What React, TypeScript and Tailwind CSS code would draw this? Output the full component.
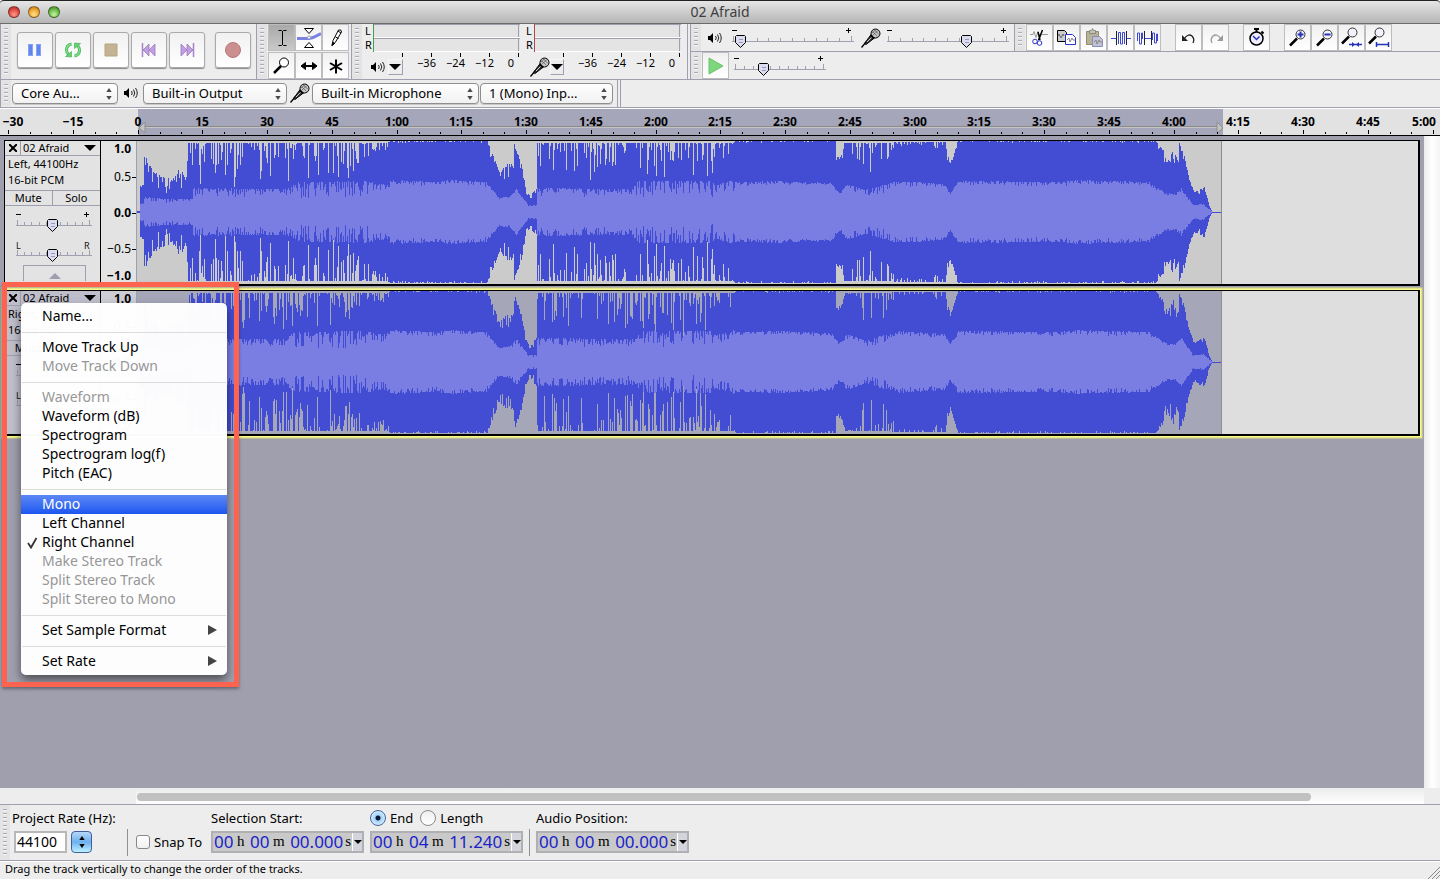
import { useMemo, useState } from 'react';
import type { ReactNode } from 'react';
import clsx from 'clsx';

const PX_PER_15S = 64.75;
const RULER_ZERO = 138;
const CLIP_WIDTH = 1084;
const MID = 71;

type Point = [x: number, low: number, high: number, dips: number];

// x, quiet limit, loud limit, share of quiet columns
const peaks: Point[] = [
  [0, 1, 1, 0],
  [3, 1, 1, 0],
  [3, 22, 28, 0.7],
  [7, 24, 28, 0.7],
  [7, 36, 58, 0.9],
  [12, 30, 48, 1],
  [20, 20, 38, 1],
  [28, 16, 34, 1],
  [40, 18, 42, 1],
  [50, 20, 38, 1],
  [50, 26, 69, 0.7],
  [56, 26, 69, 0.7],
  [56, 20, 69, 0.52],
  [130, 26, 69, 0.52],
  [200, 24, 69, 0.6],
  [226, 40, 69, 0.6],
  [232, 54, 69, 0.6],
  [250, 58, 69, 0.6],
  [253, 69, 71, 0.6],
  [350, 69, 71, 0.6],
  [353, 54, 64, 0.8],
  [362, 26, 40, 0.8],
  [370, 34, 48, 0.9],
  [376, 34, 48, 0.9],
  [377, 58, 68, 0.8],
  [384, 38, 48, 0.8],
  [389, 16, 22, 0.8],
  [393, 12, 16, 0.8],
  [400, 12, 26, 0.8],
  [400, 32, 69, 0.5],
  [505, 28, 69, 0.52],
  [570, 20, 69, 0.55],
  [578, 44, 69, 0.6],
  [596, 50, 69, 0.6],
  [598, 69, 71, 0.5],
  [698, 69, 71, 0.5],
  [699, 50, 54, 0.8],
  [705, 52, 58, 0.8],
  [707, 60, 69, 0.6],
  [727, 32, 69, 0.55],
  [750, 42, 69, 0.55],
  [758, 64, 70, 0.5],
  [795, 68, 70, 0.5],
  [800, 58, 70, 0.5],
  [808, 62, 70, 0.5],
  [810, 44, 56, 0.8],
  [815, 46, 52, 0.8],
  [820, 66, 70, 0.5],
  [821, 69, 71, 0.5],
  [1018, 69, 71, 0.5],
  [1026, 50, 62, 0.8],
  [1030, 38, 50, 0.8],
  [1036, 44, 62, 0.8],
  [1041, 40, 50, 0.8],
  [1042, 60, 69, 0.5],
  [1047, 46, 56, 0.8],
  [1052, 26, 32, 0.8],
  [1057, 16, 20, 0.8],
  [1067, 18, 25, 0.8],
  [1072, 4, 6, 0.5],
  [1075, 0.5, 0.5, 0],
  [1084, 0.5, 0.5, 0],
];

const rms: Point[] = [
  [0, 0, 0, 0],
  [3, 0, 0, 0],
  [3, 7, 8, 0.5],
  [7, 8, 10, 0.5],
  [7, 11, 15, 0.8],
  [30, 8, 13, 0.8],
  [56, 8, 13, 0.8],
  [56, 15, 24, 0.9],
  [150, 15, 23, 0.9],
  [155, 13, 30, 0.9],
  [226, 12, 31, 0.9],
  [246, 20, 28, 0.9],
  [256, 27, 32, 0.9],
  [300, 25, 30, 0.9],
  [312, 28, 32, 0.9],
  [349, 25, 30, 0.9],
  [362, 11, 14, 0.8],
  [373, 13, 16, 0.8],
  [379, 19, 23, 0.8],
  [391, 5, 7, 0.8],
  [400, 5, 7, 0.8],
  [400, 15, 24, 0.9],
  [495, 14, 23, 0.9],
  [500, 12, 31, 0.9],
  [575, 12, 31, 0.9],
  [578, 18, 27, 0.9],
  [596, 20, 32, 0.9],
  [598, 26, 30, 0.9],
  [640, 27, 31, 0.9],
  [694, 25, 29, 0.9],
  [702, 16, 19, 0.8],
  [710, 22, 28, 0.9],
  [727, 13, 22, 0.9],
  [750, 18, 28, 0.9],
  [760, 26, 31, 0.9],
  [807, 23, 28, 0.9],
  [813, 17, 19, 0.8],
  [821, 26, 31, 0.9],
  [920, 25, 30, 0.9],
  [940, 27, 32, 0.9],
  [1012, 25, 30, 0.9],
  [1028, 17, 19, 0.8],
  [1038, 15, 18, 0.8],
  [1044, 19, 24, 0.8],
  [1056, 6, 7, 0.8],
  [1066, 6, 8, 0.8],
  [1075, 0, 0, 0],
  [1084, 0, 0, 0],
];

function makeRandom(seed: number) {
  let s = seed;
  return () => {
    s = (s * 1664525 + 1013904223) % 4294967296;
    return s / 4294967296;
  };
}

function sample(points: Point[], x: number) {
  let i = 0;
  while (i < points.length - 2 && points[i + 1][0] <= x) i++;
  const a = points[i];
  const b = points[i + 1];
  const t = (x - a[0]) / (b[0] - a[0]);
  return { low: a[1] + (b[1] - a[1]) * t, high: a[2] + (b[2] - a[2]) * t, dips: a[3] };
}

function columnPath(points: Point[], seed: number) {
  const random = makeRandom(seed);
  let d = '';
  for (let x = 0; x < CLIP_WIDTH; x++) {
    const { low, high, dips } = sample(points, x);
    const depth = random() < dips ? random() ** 2 : 0;
    const skew = 0.7 + random() * 0.3;
    const up = high - (high - low) * depth * skew;
    const down = high - (high - low) * depth;
    const top = Math.round(MID - up);
    const bottom = Math.max(top, Math.round(MID + down));
    if (high > 0) d += `M${x} ${top}h1V${bottom === top ? top + 1 : bottom}h-1z`;
  }
  return d;
}

function Waveform({ seed }: { seed: number }) {
  const outer = useMemo(() => columnPath(peaks, seed), [seed]);
  const inner = useMemo(() => columnPath(rms, seed + 7), [seed]);
  return (
    <svg width={CLIP_WIDTH} height="143" shapeRendering="crispEdges" className="block shrink-0">
      <path d={outer} fill="#434dd3" />
      <path d={inner} fill="#7a7ee3" />
    </svg>
  );
}

function Grip() {
  return (
    <div className="flex w-[10px] shrink-0 flex-col items-center self-stretch bg-[#e3e3e3] py-1">
      <div className="w-1 flex-1 bg-[repeating-linear-gradient(to_bottom,#a9a9ba_0_1px,#f6f6f6_1px_2px,transparent_2px_4px)]" />
    </div>
  );
}

function SpeakerIcon() {
  return (
    <svg width="14" height="14" viewBox="0 0 14 14" className="shrink-0">
      <path d="M0 5h2l3-3v10L2 9H0z" fill="#000" />
      <path d="M7.500 5q1.500 2 0 4M9.500 3.500q2.500 3.500 0 7M11.500 2q3.500 5 0 10" fill="none" stroke="#222" strokeWidth="1" />
    </svg>
  );
}

function MicIcon() {
  return (
    <svg width="20" height="20" viewBox="0 0 20 20" className="shrink-0">
      <path d="M0.500 19.500l5-6" stroke="#000" strokeWidth="1.300" />
      <path d="M3.500 15.500L10.500 6l3.500 3.500L5 16.500z" fill="#333" stroke="#000" />
      <path d="M6 14l5.500-5.500" stroke="#ccc" strokeWidth="1" />
      <circle cx="14.500" cy="5.500" r="4.500" fill="#c8c8c8" stroke="#000" />
      <path d="M11.500 3.500l5 5M13.500 2l4.500 4.500M11.500 7.500l5.500-5M11 5l4-3.500" stroke="#555" strokeWidth=".7" />
      <path d="M10 7.500l3 3" stroke="#000" strokeWidth="1.800" />
    </svg>
  );
}

function Updown() {
  return (
    <svg width="6" height="12" viewBox="0 0 6 12" className="pointer-events-none absolute right-[6px] top-[5px]">
      <path d="M3 0l2.700 4H.3zM3 12l2.700-4H.3z" fill="#4b4b4b" />
    </svg>
  );
}

interface SliderProps {
  label: string;
  value: number;
  width: number;
  ticks: number;
  minus?: string;
  plus?: string;
}

function Slider({ label, value, width, ticks, minus = '−', plus = '+' }: SliderProps) {
  const [current, setCurrent] = useState(value);
  const x = Math.round(5 + ((width - 11) * current) / 100) + 0.5;
  const letters = minus === 'L';
  return (
    <div className="relative h-[23px] shrink-0">
      <svg width={width} height="23" shapeRendering="crispEdges" className="block">
        <path d={`M0 15.500H${width}`} stroke="#a0a0b0" />
        {Array.from({ length: ticks }, (_, i) => {
          const tx = Math.round(1 + (i * (width - 4)) / (ticks - 1));
          const end = i === 0 || i === ticks - 1;
          return <path key={i} d={`M${tx + 0.5} ${end ? 10 : 12}V15`} stroke="#a0a0b0" />;
        })}
        {letters ? (
          <g fontSize="9" fill="#111">
            <text x="0" y="9">{minus}</text>
            <text x={width - 8} y="9">{plus}</text>
          </g>
        ) : (
          <path d={`M0 4.500h5M${width - 8} 4.500h5M${width - 5.5} 2v5`} stroke="#000" />
        )}
        <path d={`M${x - 4} 9.500h8l1 1v6l-5 5l-5-5v-6z`} fill="#dcdcf0" stroke="#000" shapeRendering="auto" />
        <path d={`M${x - 2} 13.500h4M${x - 2} 16.500h4`} stroke="#9a9ab8" />
      </svg>
      <input
        type="range"
        aria-label={label}
        value={current}
        onChange={(e) => setCurrent(Number(e.target.value))}
        className="absolute inset-0 h-full w-full cursor-pointer opacity-0"
      />
    </div>
  );
}

function TransportButton({ label, children }: { label: string; children: ReactNode }) {
  return (
    <button
      aria-label={label}
      className="flex size-9 items-center justify-center rounded-[3px] border border-[#aaa] bg-linear-to-b from-[#f1f1f1] to-white shadow-[0_1px_1px_#888]"
    >
      <svg width="18" height="18" viewBox="0 0 18 18">{children}</svg>
    </button>
  );
}

function ToolButton({ label, pressed, children }: { label: string; pressed?: boolean; children: ReactNode }) {
  return (
    <button
      aria-label={label}
      className={clsx(
        'flex size-[27px] shrink-0 items-center justify-center border border-[#bdbdbd]',
        pressed ? 'bg-linear-to-b from-[#a9a9a9] to-[#c9c9c9]' : 'bg-linear-to-b from-[#f0f0f0] to-white',
      )}
    >
      <svg width="24" height="24" viewBox="0 0 24 24" fill="none" stroke="#000">{children}</svg>
    </button>
  );
}

function TransportBar() {
  return (
    <div className="flex w-[256px] shrink-0 items-center border-r border-[#9f9fb0]">
      <Grip />
      <div className="flex gap-[2px] pb-[3px] pl-[6px]">
        <TransportButton label="Pause">
          <path d="M2 3h5v12H2zM10 3h5v12h-5z" fill="#5e86ee" />
          <path d="M2.500 3.500h4v11h-4zM10.500 3.500h4v11h-4z" fill="none" stroke="#86a6f4" />
        </TransportButton>
        <TransportButton label="Loop">
          <path d="M7.500 3Q2.500 4 2.500 9q0 2.500 2 4.500M10.500 15Q15.500 14 15.500 9q0-2.500-2-4.500" fill="none" stroke="#45b358" strokeWidth="3" />
          <path d="M7.500 3Q2.500 4 2.500 9q0 2.500 2 4.500M10.500 15Q15.500 14 15.500 9q0-2.500-2-4.500" fill="none" stroke="#7be087" strokeWidth="1.500" />
          <path d="M1.500 15.500l6 .5V10.500zM16.500 2.500l-6-.5V7.500z" fill="#66d275" stroke="#3da64e" strokeWidth=".6" />
        </TransportButton>
        <TransportButton label="Stop">
          <path d="M3 3h12v12H3z" fill="#c4b494" stroke="#b5a582" />
        </TransportButton>
        <TransportButton label="Skip to Start">
          <path d="M2.500 2v14" stroke="#a583c8" strokeWidth="1.500" />
          <path d="M9 3v12L3 9zM15 3v12L9 9z" fill="#c09fe0" stroke="#9c76c2" strokeWidth=".8" />
        </TransportButton>
        <TransportButton label="Skip to End">
          <path d="M15.500 2v14" stroke="#a583c8" strokeWidth="1.500" />
          <path d="M3 3v12l6-6zM9 3v12l6-6z" fill="#c09fe0" stroke="#9c76c2" strokeWidth=".8" />
        </TransportButton>
        <div className="w-[6px]" />
        <TransportButton label="Record">
          <circle cx="9" cy="9" r="7.500" fill="#cb8f8f" stroke="#b87878" />
        </TransportButton>
      </div>
    </div>
  );
}

function ToolsBar() {
  return (
    <div className="flex w-[95px] shrink-0 border-r border-[#9f9fb0]">
      <Grip />
      <div className="grid grid-cols-3 gap-y-px pl-px">
        <ToolButton label="Selection Tool" pressed>
          <path d="M8.500 4.500h3l1 1 1-1h3M12.500 5v14M8.500 19.500h3l1-1 1 1h3" />
        </ToolButton>
        <ToolButton label="Envelope Tool">
          <path d="M0 12.500h12l4-1 8-4" stroke="#7a82e4" strokeWidth="3" />
          <path d="M7.500 2.500h9L12 7.500zM7.500 21.500h9L12 16.500z" fill="#fff" />
          <circle cx="12" cy="11.500" r="1.500" fill="#fff" stroke="#99a" />
        </ToolButton>
        <ToolButton label="Draw Tool">
          <path d="M8 19.500l1-5L14.500 4q3-1 3 2L11.500 16z" fill="#fff" />
          <path d="M14 5l3 2M8 19.500l1-3 1.500 1zM11.500 11l3 1.500" fill="#000" />
        </ToolButton>
        <ToolButton label="Zoom Tool">
          <circle cx="14" cy="8.500" r="4.500" fill="#fff" />
          <path d="M11 12l-7 7" strokeWidth="2.500" />
        </ToolButton>
        <ToolButton label="Time Shift Tool">
          <path d="M5 12h14" strokeWidth="2" />
          <path d="M4 12l4.500-3.500v7zM20 12l-4.500-3.500v7z" fill="#000" />
        </ToolButton>
        <ToolButton label="Multi Tool">
          <path d="M12 5.500v14M6 9l12 7M18 9L6 16" strokeWidth="2" />
        </ToolButton>
      </div>
    </div>
  );
}

function Meter({ label, color, icon }: { label: string; color: string; icon: ReactNode }) {
  return (
    <div className="w-[158px] shrink-0">
      {['L', 'R'].map((ch) => (
        <div key={ch} className="flex h-[14px] items-stretch text-[11px] leading-[14px]">
          <span className="w-2">{ch}</span>
          <span className={clsx('w-px', color)} />
          <span className="w-[146px] border-y border-t-[#9f9fb0] border-b-white bg-[#e4e4e4]">
            <span className="block h-full w-[145px] border-r border-[#9f9fb0]" />
          </span>
        </div>
      ))}
      <svg width="158" height="5" shapeRendering="crispEdges" className="block">
        <path d="M37.500 1v4M66.500 1v4M95.500 1v4M124.500 1v4M153.500 1v4" stroke="#000" />
      </svg>
      <div className="flex items-start">
        <span className="flex h-5 w-[27px] items-center justify-center pl-1">{icon}</span>
        <button aria-label={label} className="mt-[2px] flex h-4 w-[18px] items-center justify-center border border-[#f8f8f8] border-r-[#9f9fb0] border-b-[#9f9fb0]">
          <svg width="12" height="6"><path d="M0 0h12L6 6z" /></svg>
        </button>
        <span className="flex pl-[9px] text-center text-[11px] leading-[12px]">
          <span className="w-[29px]">−36</span>
          <span className="w-[29px]">−24</span>
          <span className="w-[29px]">−12</span>
          <span className="w-6">0</span>
        </span>
      </div>
    </div>
  );
}

function ZoomLens({ children }: { children?: ReactNode }) {
  return (
    <>
      <path d="M11 12.500l-7 7" strokeWidth="2.500" />
      <circle cx="14.500" cy="8.500" r="4.500" fill="#f2f2fa" stroke="#333" />
      {children}
    </>
  );
}

function EditBar() {
  return (
    <div className="flex flex-1 items-center">
      <Grip />
      <div className="flex pl-px">
        <ToolButton label="Cut">
          <path d="M2 8.500h3l1-3 2 6 2-6 2 6 1-3h7" stroke="#999" />
          <path d="M14.500 4l-4 10M10 6l2 8" strokeWidth="1.500" />
          <circle cx="7" cy="15.500" r="2.300" stroke="#2a35c8" />
          <circle cx="11.500" cy="17" r="2.300" stroke="#2a35c8" />
        </ToolButton>
        <ToolButton label="Copy">
          <path d="M2.500 4.500h7l2 2v9h-9z" fill="#ccc" />
          <path d="M3 10l1-2 2 4 2-4 1 2" stroke="#666" />
          <path d="M10.500 8.500h7l3 3v7h-10z" fill="#fff" stroke="#2a35c8" />
          <path d="M12 14l2-2 1 4 2-4 1 2h2" stroke="#888" />
        </ToolButton>
        <ToolButton label="Paste">
          <path d="M4.500 5.500h12v13h-12z" fill="#b5b297" stroke="#8f8d78" />
          <path d="M7.500 4.500h2l1-2 1 2h2v3h-6z" fill="#c5c3aa" stroke="#888" />
          <path d="M10.500 10.500h7l3 3v7h-10z" fill="#c0c2d4" stroke="#8c8fb4" />
          <path d="M12 16l2-2 1 4 2-4 1 2h2" stroke="#888" />
        </ToolButton>
        <ToolButton label="Trim">
          <path d="M2 12.500h5M17 12.500h5M9.500 18V6.500h2V18h2V6.500h2V18" stroke="#3c49d0" />
          <path d="M7.500 5v14M17.500 5v14" stroke="#223" />
        </ToolButton>
        <ToolButton label="Silence">
          <path d="M1.500 15V7h2v11h2V7h1v6M8 12.500h7M16.500 14V7h2v10h2V8h1v7" stroke="#3c49d0" />
          <path d="M8.500 5v14M15.500 5v14" stroke="#223" />
        </ToolButton>
      </div>
      <div className="flex pl-[14px]">
        <ToolButton label="Undo">
          <path d="M5 9v6h6z" fill="#222" stroke="none" />
          <path d="M7 13q4-6 8-3 3 3 1 7" stroke="#222" strokeWidth="1.300" />
        </ToolButton>
        <ToolButton label="Redo">
          <path d="M19 9v6h-6z" fill="#999" stroke="none" />
          <path d="M17 13q-4-6-8-3-3 3-1 7" stroke="#999" strokeWidth="1.300" />
        </ToolButton>
      </div>
      <div className="pl-[14px]">
        <ToolButton label="Timer Record">
          <circle cx="11.500" cy="12.500" r="6.500" fill="#eef" strokeWidth="1.500" />
          <path d="M11.500 3v3M9 3h5M16.500 5.500l2 2" strokeWidth="2" />
          <path d="M8 10l3.500 3.500 3-3" stroke="#2a35c8" strokeWidth="1.500" />
        </ToolButton>
      </div>
      <div className="flex pl-[14px]">
        <ToolButton label="Zoom In">
          <ZoomLens><path d="M11.500 8.500h6M14.500 5.500v6" stroke="#2633b8" strokeWidth="2" /></ZoomLens>
        </ToolButton>
        <ToolButton label="Zoom Out">
          <ZoomLens><path d="M11.500 8.500h6" stroke="#2633b8" strokeWidth="2" /></ZoomLens>
        </ToolButton>
        <ToolButton label="Fit Selection">
          <g transform="translate(-2 -2)"><ZoomLens /></g>
          <path d="M9 18.500h13" stroke="#2633b8" strokeWidth="1.500" />
          <path d="M12 16l3 2.500-3 2.500zM19 16l-3 2.500 3 2.500z" fill="#2633b8" stroke="none" />
        </ToolButton>
        <ToolButton label="Fit Project">
          <g transform="translate(-2 -2)"><ZoomLens /></g>
          <path d="M9 18.500h13M9.500 16v5M21.500 16v5" stroke="#2633b8" strokeWidth="1.500" />
        </ToolButton>
      </div>
    </div>
  );
}

function DeviceSelect({ label, value, className }: { label: string; value: string; className: string }) {
  return (
    <div className={clsx('relative shrink-0', className)}>
      <select
        aria-label={label}
        className="block h-[21px] w-full appearance-none rounded-[4px] border border-[#8e8e8e] bg-linear-to-b from-white to-[#f1f1f1] pb-px pl-2 text-[13px] leading-[18px] shadow-[0_1px_0_#c8c8c8]"
      >
        <option>{value}</option>
      </select>
      <Updown />
    </div>
  );
}

function formatTime(seconds: number) {
  if (Math.abs(seconds) < 60) return String(seconds).replace('-', '−');
  return `${Math.floor(seconds / 60)}:${String(seconds % 60).padStart(2, '0')}`;
}

function Timeline() {
  const marks = Array.from({ length: 23 }, (_, i) => i - 2);
  return (
    <div className="overflow-hidden border-t border-b border-t-white border-b-black bg-[#e2e2e2]">
      <svg width="1440" height="26" className="block" shapeRendering="crispEdges">
        <path d="M138 0h1085v26H138z" fill="#a5a6b9" />
        <path d="M138 17.500h1084" stroke="#8b8b8b" />
        <path d="M138 18.500h1084" stroke="#c4c4c4" />
        <path d="M145 13v11l-6-5zM1217 13v11l6-5z" fill="#c2c2c2" stroke="#8e8e8e" shapeRendering="auto" />
        {marks.map((n) => {
          const x = Math.floor(RULER_ZERO + n * PX_PER_15S);
          const edge = n === -2 ? 13 : n === 20 ? 1424 : x;
          return (
            <g key={n}>
              <path d={`M${x + 0.5} 21v4M${x + 22.5} 23v2M${x + 43.5} 23v2`} stroke="#000" />
              {n <= 20 && (
                <text x={edge} y="17" textAnchor="middle" fontSize="12" fontWeight="700">
                  {formatTime(n * 15)}
                </text>
              )}
            </g>
          );
        })}
      </svg>
    </div>
  );
}

function Track({ channel, seed, selected, children }: { channel: string; seed: number; selected?: boolean; children?: ReactNode }) {
  return (
    <section
      className={clsx(
        'relative flex h-[146px] border border-r-2 border-b-2 border-black',
        selected && 'shadow-[0_0_0_1px_#fbfb8a,0_0_0_2px_#e4e48c,0_0_0_3px_#bcbc94]',
      )}
    >
      <div className={clsx('flex w-24 shrink-0 flex-col overflow-hidden border-r border-black', selected ? 'bg-[#bfbfcb]' : 'bg-[#e3e3e3]')}>
        <div className="flex h-[15px] shrink-0 border-b border-[#9f9fb0]">
          <button aria-label="Close track" className="flex w-4 items-center justify-center border-r border-[#9f9fb0]">
            <svg width="8" height="8"><path d="M0 0l8 8M8 0L0 8" stroke="#000" strokeWidth="2" /></svg>
          </button>
          <button className="flex flex-1 items-center justify-between pl-[2px] pr-1 text-[11px] leading-[14px]">
            <span>02 Afraid</span>
            <svg width="12" height="6"><path d="M0 0h12L6 6z" /></svg>
          </button>
        </div>
        <div className="shrink-0 pl-[3px] text-[11px] leading-4">
          <p>{channel}, 44100Hz</p>
          <p>16-bit PCM</p>
        </div>
        <div className="mt-[2px] grid h-4 shrink-0 grid-cols-2 border-y border-[#9f9fb0] text-[11px] leading-[14px]">
          <button className="border-r border-[#9f9fb0]">Mute</button>
          <button>Solo</button>
        </div>
        <div className="flex flex-col gap-[7px] pl-[11px] pt-[4px]">
          <Slider label="Gain" value={48} width={76} ticks={11} />
          <Slider label="Pan" value={48} width={76} ticks={11} minus="L" plus="R" />
        </div>
        <button aria-label="Collapse" className="mx-[18px] mr-[14px] mt-[2px] flex h-4 shrink-0 items-center justify-center border border-b-0 border-[#9f9fb0] pt-1">
          <svg width="12" height="6"><path d="M0 6h12L6 0z" fill="#9f9fb0" /></svg>
        </button>
      </div>
      <div
        className={clsx(
          'grid w-9 shrink-0 grid-rows-[16px_40px_32px_40px_14px] items-center border-r border-[#9f9fb0] pl-px text-[12px] leading-4',
          selected ? 'bg-[#cdcdd6]' : 'bg-[#e3e3e3]',
        )}
      >
        {['1.0', '0.5', '0.0', '−0.5', '−1.0'].map((v) => (
          <span key={v} className={clsx('flex items-center justify-end gap-px', !v.endsWith('5') && 'font-bold')}>
            {v}
            <span className={clsx('h-px w-1', v.endsWith('1.0') ? 'bg-transparent' : 'bg-black')} />
          </span>
        ))}
      </div>
      <div className="flex min-w-0 flex-1 overflow-hidden bg-[#dedede]">
        <div className={clsx('shrink-0 border-r border-[#8e8e90]', selected ? 'bg-[#a5a6b8]' : 'bg-[#cbcbcb]')}>
          <Waveform seed={seed} />
        </div>
      </div>
      {children}
    </section>
  );
}

interface MenuEntry {
  text: string;
  state?: 'disabled' | 'active' | 'checked' | 'submenu';
}

const menuGroups: MenuEntry[][] = [
  [{ text: 'Name...' }],
  [{ text: 'Move Track Up' }, { text: 'Move Track Down', state: 'disabled' }],
  [
    { text: 'Waveform', state: 'disabled' },
    { text: 'Waveform (dB)' },
    { text: 'Spectrogram' },
    { text: 'Spectrogram log(f)' },
    { text: 'Pitch (EAC)' },
  ],
  [
    { text: 'Mono', state: 'active' },
    { text: 'Left Channel' },
    { text: 'Right Channel', state: 'checked' },
    { text: 'Make Stereo Track', state: 'disabled' },
    { text: 'Split Stereo Track', state: 'disabled' },
    { text: 'Split Stereo to Mono', state: 'disabled' },
  ],
  [{ text: 'Set Sample Format', state: 'submenu' }],
  [{ text: 'Set Rate', state: 'submenu' }],
];

function TrackMenu() {
  return (
    <div role="menu" className="absolute left-4 top-3 z-10 w-[206px] rounded-[5px] bg-white/98 py-1 shadow-[0_5px_10px_rgba(0,0,0,0.5)]">
      {menuGroups.map((group, i) => (
        <div key={i}>
          {i > 0 && <div className="mx-px my-[5px] h-[2px] border-b border-[#dcdcdc]" />}
          {group.map((item) => (
            <button
              key={item.text}
              role="menuitem"
              disabled={item.state === 'disabled'}
              className={clsx(
                'relative flex h-[19px] w-full items-center pb-[2px] pl-[21px] pr-[10px] text-left text-[14px] leading-[17px]',
                item.state === 'disabled' && 'text-[#979797]',
                item.state === 'active' && 'bg-linear-to-b from-[#5d87f5] to-[#1b55f0] text-white',
              )}
            >
              {item.state === 'checked' && (
                <svg width="12" height="12" className="absolute left-[6px] top-1">
                  <path d="M1 6l3 4.500 5.500-9.500" fill="none" stroke="#333" strokeWidth="1.800" />
                </svg>
              )}
              <span className="flex-1">{item.text}</span>
              {item.state === 'submenu' && <svg width="9" height="10"><path d="M0 0l9 5-9 5z" fill="#444" /></svg>}
            </button>
          ))}
        </div>
      ))}
    </div>
  );
}

function TimeField({ label, parts }: { label: string; parts: [string, string, string] }) {
  const units = ['h', 'm', 's'];
  return (
    <div role="group" aria-label={label} className="flex h-[22px] w-[153px] border-2 border-[#b0b0b4] bg-[#c9c9c9] pl-px">
      <div className="flex flex-1 items-center justify-between pb-[2px] pr-px">
        {parts.map((part, i) => (
          <label key={units[i]} className="flex items-center gap-[2px]">
            <input
              defaultValue={part}
              className={clsx('h-4 bg-transparent p-0 text-[17px] leading-4 text-[#1a24c8]', part.length > 2 ? 'w-[53px]' : 'w-[21px]')}
            />
            <span className="font-['Liberation_Serif',serif] text-[15px] leading-4">{units[i]}</span>
          </label>
        ))}
      </div>
      <button aria-label={`${label} format`} className="flex w-[10px] shrink-0 items-center justify-center border-l border-white bg-[#d4d4dc]">
        <svg width="8" height="4"><path d="M0 0h8L4 4z" /></svg>
      </button>
    </div>
  );
}

function Radio({ label, checked }: { label: string; checked?: boolean }) {
  return (
    <label className="flex items-center gap-1">
      <input
        type="radio"
        name="range-mode"
        defaultChecked={checked}
        className="size-4 appearance-none rounded-full border border-[#8a8a8a] bg-linear-to-b from-[#eee] to-white checked:border-[#47649c] checked:bg-[radial-gradient(circle,#0b1a38_0_2px,#a5d2f8_3px,#cfeaff_7px)]"
      />
      {label}
    </label>
  );
}

function SelectionBar() {
  return (
    <div className="flex h-[57px] border-y border-[#9f9fb0] text-[13px] leading-[18px]">
      <Grip />
      <div className="flex w-[117px] flex-col gap-1 pl-[2px] pt-1">
        <label htmlFor="rate" className="whitespace-nowrap">Project Rate (Hz):</label>
        <div className="flex gap-1 pl-[2px]">
          <input id="rate" defaultValue="44100" className="h-[22px] w-[53px] border-2 border-[#b8b8b8] bg-white pb-[2px] pl-px text-[14px] leading-4" />
          <button aria-label="Rates" className="flex h-[22px] w-[21px] items-center justify-center rounded-[4px] border border-[#3f5f9c] bg-linear-to-b from-[#b5d7f8] via-[#6db0ee] to-[#bdf0ff]">
            <svg width="6" height="12"><path d="M3 0l2.700 4H.3zM3 12l2.700-4H.3z" /></svg>
          </button>
        </div>
      </div>
      <div className="mt-6 h-[27px] w-px bg-[#909090]" />
      <label className="flex w-[83px] items-center gap-1 self-end pb-[9px] pl-2">
        <input type="checkbox" className="size-[14px] appearance-none rounded-[3px] border border-[#888] bg-linear-to-b from-white to-[#f0f0f0]" />
        Snap To
      </label>
      <div className="flex w-[159px] flex-col gap-1 pt-1">
        <span>Selection Start:</span>
        <TimeField label="Selection Start" parts={['00', '00', '00.000']} />
      </div>
      <div className="flex flex-col gap-1 pt-1">
        <div className="flex gap-[7px]">
          <Radio label="End" checked />
          <Radio label="Length" />
        </div>
        <TimeField label="Selection End" parts={['00', '04', '11.240']} />
      </div>
      <div className="mx-[6px] mt-6 h-[27px] w-px bg-[#909090]" />
      <div className="flex flex-col gap-1 pt-1">
        <span>Audio Position:</span>
        <TimeField label="Audio Position" parts={['00', '00', '00.000']} />
      </div>
    </div>
  );
}

const lights = [
  { name: 'Close', color: 'bg-[radial-gradient(circle_at_50%_75%,#ff9a8c,#e0443e_60%,#a02a26)]' },
  { name: 'Minimize', color: 'bg-[radial-gradient(circle_at_50%_75%,#ffe28a,#eda12f_60%,#a86a18)]' },
  { name: 'Zoom', color: 'bg-[radial-gradient(circle_at_50%_75%,#c6f5a0,#66b544_60%,#3c7a26)]' },
];

export default function App() {
  return (
    <div className="flex h-screen flex-col overflow-hidden bg-[#ededed] font-['Noto_Sans',sans-serif] text-black">
      <header className="relative flex h-6 shrink-0 items-center justify-center rounded-t-[4px] border-t border-b border-t-[#222] border-b-[#6b6b6b] bg-linear-to-b from-[#e6e6e6] to-[#b5b5b5]">
        <div className="absolute left-2 flex gap-2">
          {lights.map((l) => (
            <button key={l.name} aria-label={l.name} className={clsx('size-3 rounded-full border border-black/40', l.color)} />
          ))}
        </div>
        <h1 className="text-[14px] leading-5 text-[#404040]">02 Afraid</h1>
      </header>

      <div className="flex h-14 shrink-0 border-b border-l border-[#9f9fb0]">
        <TransportBar />
        <ToolsBar />
        <div className="flex w-[336px] shrink-0 gap-[3px] border-r border-[#9f9fb0]">
          <Grip />
          <Meter label="Output meter options" color="bg-[#3fa050]" icon={<SpeakerIcon />} />
          <Meter label="Input meter options" color="bg-[#b04848]" icon={<MicIcon />} />
        </div>
        <div className="ml-[2px] flex min-w-0 flex-1 flex-col border-l border-[#9f9fb0]">
          <div className="flex h-7 border-b border-[#9f9fb0]">
            <div className="flex w-[324px] shrink-0 items-center border-r border-[#9f9fb0]">
              <Grip />
              <div className="flex items-center pl-[7px]">
                <SpeakerIcon />
                <div className="w-[10px]" />
                <Slider label="Output volume" value={3} width={122} ticks={11} />
                <div className="flex w-[33px] justify-center"><MicIcon /></div>
                <Slider label="Input volume" value={67} width={122} ticks={11} />
              </div>
            </div>
            <EditBar />
          </div>
          <div className="flex flex-1 items-center">
            <Grip />
            <div className="flex items-center gap-[5px] pl-px">
              <ToolButton label="Play at speed">
                <path d="M5 4v16l14-8z" fill="#7cd67c" stroke="#6bc26b" />
              </ToolButton>
              <Slider label="Playback speed" value={30} width={92} ticks={11} />
            </div>
          </div>
        </div>
      </div>

      <div className="flex h-7 shrink-0 border-b border-l border-[#9f9fb0]">
        <div className="flex w-[617px] items-center border-r border-[#9f9fb0] pb-px">
          <Grip />
          <DeviceSelect label="Audio host" value="Core Au..." className="ml-px w-[106px]" />
          <div className="flex w-[25px] justify-center"><SpeakerIcon /></div>
          <DeviceSelect label="Output device" value="Built-in Output" className="w-36" />
          <div className="flex w-[25px] justify-center"><MicIcon /></div>
          <DeviceSelect label="Input device" value="Built-in Microphone" className="w-[167px]" />
          <DeviceSelect label="Input channels" value="1 (Mono) Inp..." className="ml-px w-[133px]" />
        </div>
        <div className="ml-[2px] border-l border-[#9f9fb0]" />
      </div>

      <Timeline />

      <main className="flex min-h-0 flex-1 bg-[#9f9fae]">
        <div className="flex min-w-0 flex-1 flex-col gap-1 p-1">
          <Track channel="Left" seed={11} />
          <Track channel="Right" seed={47} selected>
            <TrackMenu />
            <div className="pointer-events-none absolute -left-[3px] -top-[9px] z-20 h-[405px] w-[237px] border-5 border-[#fe634f] shadow-[0_2px_3px_rgba(0,0,0,0.35)]" />
          </Track>
        </div>
        <div className="w-4 shrink-0 bg-linear-to-r from-[#ececec] via-white to-[#f4f4f4]" />
      </main>

      <div className="flex h-4 shrink-0 pl-[136px] pr-4">
        <div className="flex flex-1 items-center bg-linear-to-b from-[#ececec] to-white px-px pt-[2px]">
          <div className="h-2 w-[91.3%] rounded-full bg-[#c1c1c1]" />
        </div>
      </div>

      <div className="shrink-0">
        <SelectionBar />
      </div>
      <footer className="flex h-[18px] shrink-0 items-start justify-between border-t border-white pl-[5px] text-[11px] leading-[14px]">
        <span>Drag the track vertically to change the order of the tracks.</span>
        <svg width="12" height="12" className="self-end"><path d="M0 12L12 0M4 12l8-8M8 12l4-4" stroke="#888" /></svg>
      </footer>
    </div>
  );
}
